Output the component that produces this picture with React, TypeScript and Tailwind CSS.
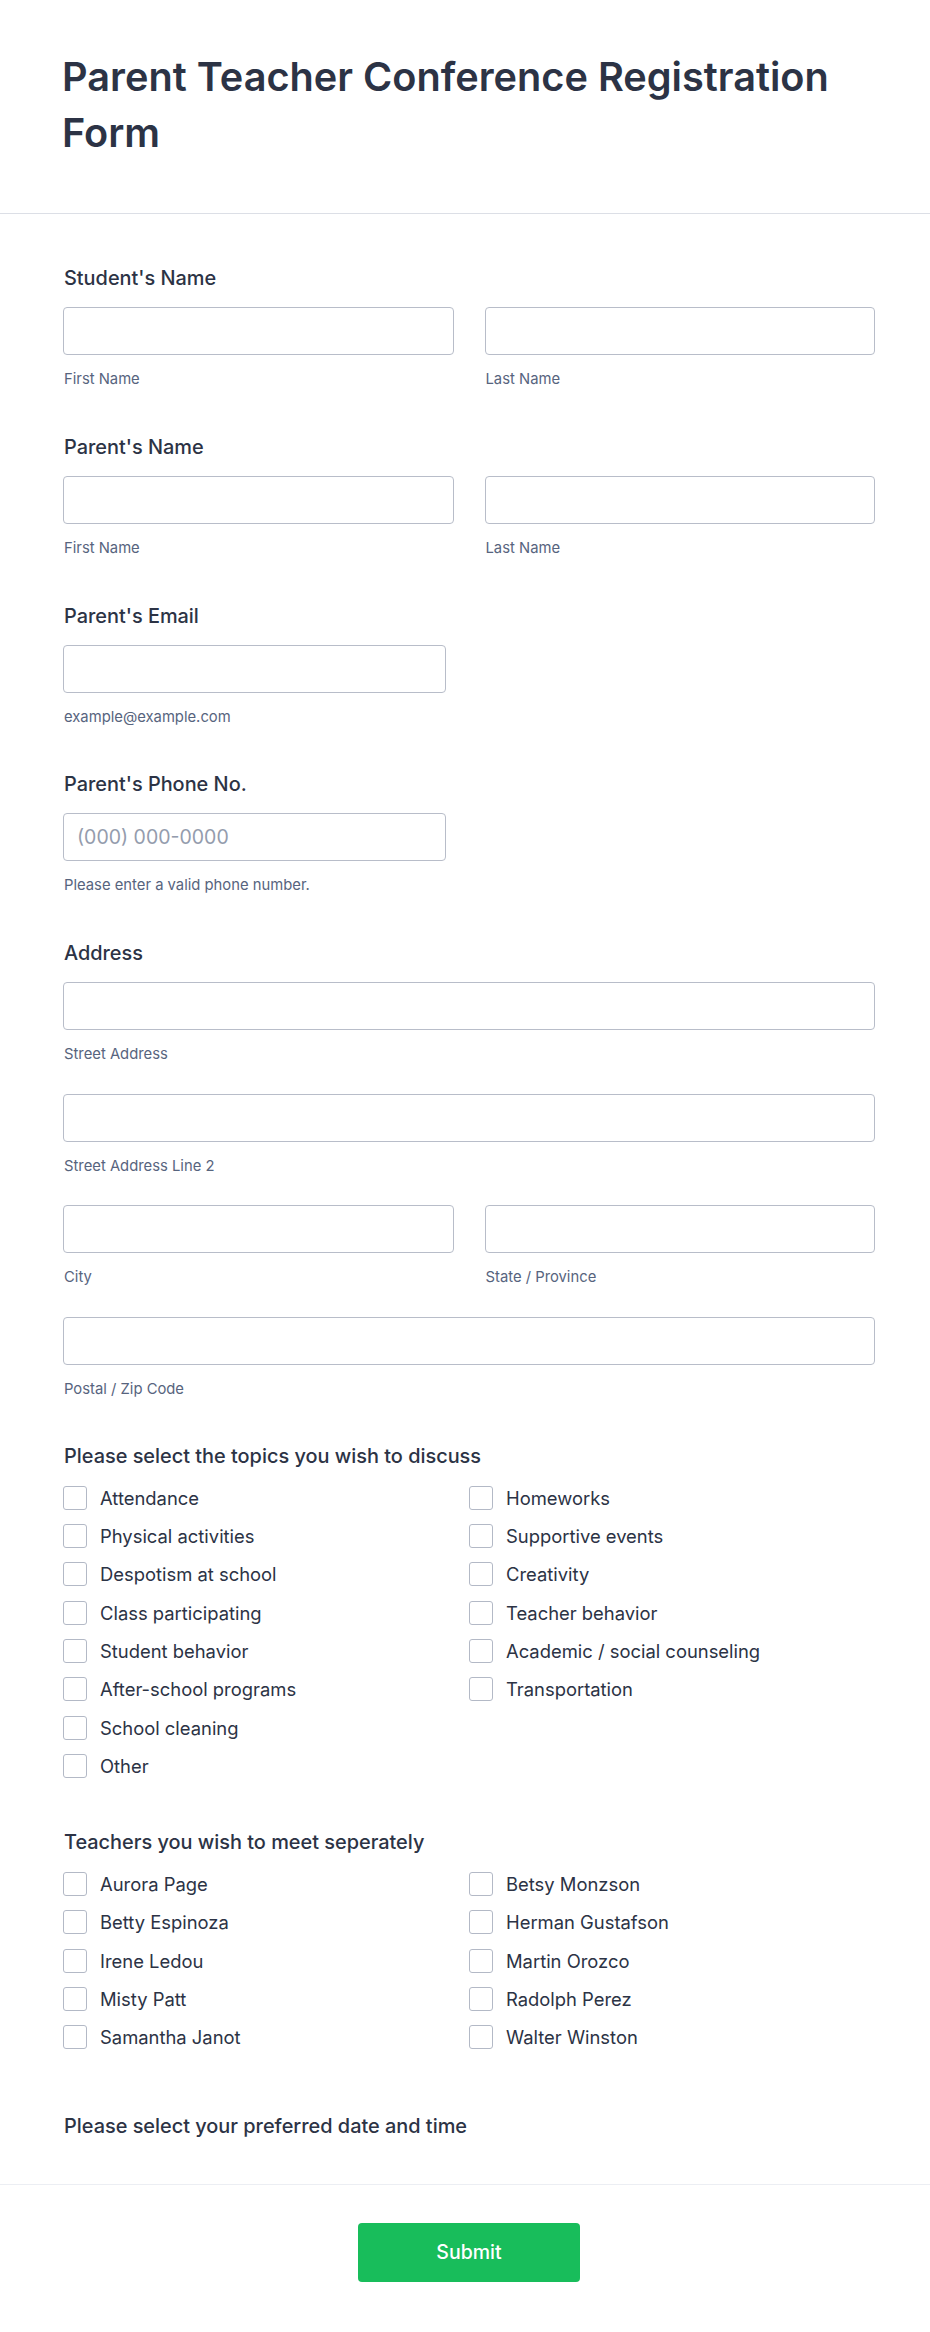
import React from "react";

const topicsLeft = [
  "Attendance",
  "Physical activities",
  "Despotism at school",
  "Class participating",
  "Student behavior",
  "After-school programs",
  "School cleaning",
  "Other",
];
const topicsRight = [
  "Homeworks",
  "Supportive events",
  "Creativity",
  "Teacher behavior",
  "Academic / social counseling",
  "Transportation",
];
const teachersLeft = ["Aurora Page", "Betty Espinoza", "Irene Ledou", "Misty Patt", "Samantha Janot"];
const teachersRight = ["Betsy Monzson", "Herman Gustafson", "Martin Orozco", "Radolph Perez", "Walter Winston"];

function Label({ children }: { children: React.ReactNode }) {
  return <div className="h-[24px] pl-px text-[19.9px] leading-[24px] font-medium text-[#2c3345]">{children}</div>;
}

function Field({ sub, placeholder, className = "w-full" }: { sub: string; placeholder?: string; className?: string }) {
  return (
    <div className={className}>
      <input
        type="text"
        placeholder={placeholder}
        className="block h-[48px] w-full rounded-[4px] border border-[#b8bdc9] bg-white px-[13px] text-[19.5px] text-[#2c3345] outline-none placeholder:text-[#949cad]"
      />
      <div className="mt-[15px] pl-px text-[14.8px] leading-[18px] text-[#57647e]">{sub}</div>
    </div>
  );
}

function CheckColumn({ items }: { items: string[] }) {
  return (
    <div className="flex flex-col gap-[14.33px]">
      {items.map((it) => (
        <label key={it} className="flex h-[24px] items-center">
          <span className="h-[24px] w-[24px] shrink-0 rounded-[3px] border border-[#b3b9c6] bg-white" />
          <span className="ml-[13px] text-[18.4px] leading-[24px] text-[#2c3345]">{it}</span>
        </label>
      ))}
    </div>
  );
}

function CheckGroup({ left, right }: { left: string[]; right: string[] }) {
  return (
    <div className="mt-[18px] grid grid-cols-2 pb-[5px]">
      <CheckColumn items={left} />
      <CheckColumn items={right} />
    </div>
  );
}

export default function App() {
  return (
    <div className="min-h-screen w-full bg-white font-['Inter',sans-serif]">
      {/* header */}
      <div className="border-b border-[#dcdfe6] pt-[49px] pb-[52px]">
        <h1 className="ml-[62px] w-[813px] text-[39.7px] leading-[56px] font-semibold text-[#2c3345]">
          Parent Teacher Conference Registration Form
        </h1>
      </div>

      {/* body */}
      <div className="ml-[63px] flex w-[812px] flex-col gap-[46.75px] pt-[52px] pb-[46.5px]">
        <div>
          <Label>Student's Name</Label>
          <div className="mt-[17px] flex gap-[31px]">
            <Field sub="First Name" className="flex-1" />
            <Field sub="Last Name" className="flex-1" />
          </div>
        </div>

        <div>
          <Label>Parent's Name</Label>
          <div className="mt-[17px] flex gap-[31px]">
            <Field sub="First Name" className="flex-1" />
            <Field sub="Last Name" className="flex-1" />
          </div>
        </div>

        <div>
          <Label>Parent's Email</Label>
          <div className="mt-[17px]">
            <Field sub="example@example.com" className="w-[383px]" />
          </div>
        </div>

        <div>
          <Label>Parent's Phone No.</Label>
          <div className="mt-[17px]">
            <Field sub="Please enter a valid phone number." placeholder="(000) 000-0000" className="w-[383px]" />
          </div>
        </div>

        <div>
          <Label>Address</Label>
          <div className="mt-[17px] flex flex-col gap-[30.7px]">
            <Field sub="Street Address" />
            <Field sub="Street Address Line 2" />
            <div className="flex gap-[31px]">
              <Field sub="City" className="flex-1" />
              <Field sub="State / Province" className="flex-1" />
            </div>
            <Field sub="Postal / Zip Code" />
          </div>
        </div>

        <div className="-mt-[1px]">
          <Label>Please select the topics you wish to discuss</Label>
          <CheckGroup left={topicsLeft} right={topicsRight} />
        </div>

        <div>
          <Label>Teachers you wish to meet seperately</Label>
          <CheckGroup left={teachersLeft} right={teachersRight} />
        </div>

        <div className="mt-[13px]">
          <Label>Please select your preferred date and time</Label>
        </div>
      </div>

      {/* footer */}
      <div className="border-t border-[#eceef3] pt-[38px] pb-[49px]">
        <div className="ml-[63px] flex w-[812px] justify-center">
          <button className="h-[59px] w-[222px] rounded-[4px] bg-[#18bd5b] text-[19.5px] font-medium text-white">
            Submit
          </button>
        </div>
      </div>
    </div>
  );
}
